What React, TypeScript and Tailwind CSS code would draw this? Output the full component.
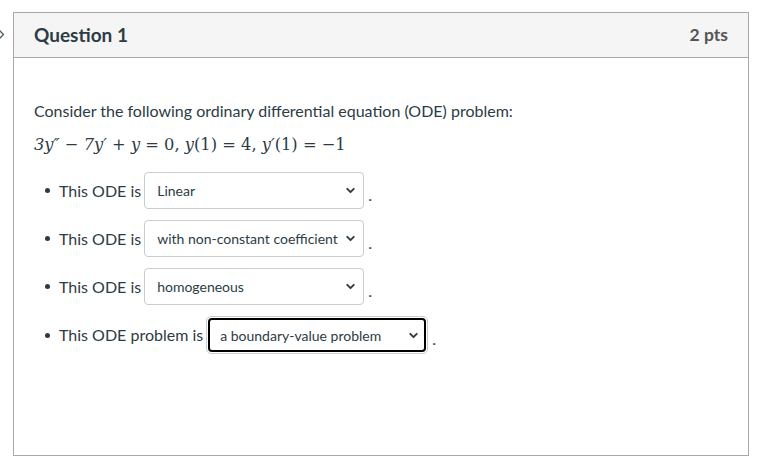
import { ChevronDown } from "lucide-react";

const rows = [
  { label: "This ODE is", value: "Linear", focused: false },
  { label: "This ODE is", value: "with non-constant coefficient", focused: false },
  { label: "This ODE is", value: "homogeneous", focused: false },
  { label: "This ODE problem is", value: "a boundary-value problem", focused: true },
];

function Select({ value, focused }: { value: string; focused: boolean }) {
  if (focused) {
    return (
      <div className="rounded-[5px] border border-[#c7cdd1] p-px">
        <div className="flex h-[34px] w-[218px] items-center justify-between rounded-[4px] border-2 border-black pl-[10px] pr-[4px] text-[14px] text-[#2d3b45]">
          <span>{value}</span>
          <ChevronDown className="h-[13px] w-[13px]" strokeWidth={3.5} />
        </div>
      </div>
    );
  }
  return (
    <div className="flex h-[37px] w-[220px] items-center justify-between rounded-[4px] border border-[#c7cdd1] pl-[12px] pr-[6px] text-[14px] text-[#2d3b45]">
      <span>{value}</span>
      <ChevronDown className="h-[13px] w-[13px]" strokeWidth={3.5} />
    </div>
  );
}

export default function App() {
  return (
    <div className="relative h-[461px] w-[757px] bg-white pl-[13px] pt-[12px] font-['Lato','Noto_Sans',sans-serif] text-[#2d3b45]">
      <svg className="absolute left-[-3px] top-[28px]" width="8" height="13" viewBox="0 0 8 13">
        <path d="M1 1 L6.5 6.5 L1 12" fill="none" stroke="#4a5a66" strokeWidth="1.3" />
      </svg>
      <div className="h-[444px] w-[736px] border border-[#a8a8a8]">
        <div className="flex h-[45px] items-center justify-between border-b border-[#a8a8a8] bg-[#f5f5f5] pl-[20px] pr-[20px]">
          <span className="text-[19px] font-bold">Question 1</span>
          <span className="text-[17.5px] font-bold text-[#555555]">2 pts</span>
        </div>
        <div className="pl-[20px] pt-[41px]">
          <p className="text-[16px]">Consider the following ordinary differential equation (ODE) problem:</p>
          <p className="mt-[10px] font-['DejaVu_Serif',serif] text-[16.3px]">
            <i>3y″ − 7y′ + y</i> = 0, <i>y</i>(1) = 4, <i>y′</i>(1) = −1
          </p>
          <ul className="mt-[15px] flex flex-col gap-[11px] pl-[11px]">
            {rows.map((r, i) => (
              <li key={i} className="flex items-center text-[16px]">
                <span className="mr-[9px] h-[5px] w-[5px] rounded-full bg-[#2d3b45]" />
                <span className="mr-[3px]">{r.label}</span>
                <Select value={r.value} focused={r.focused} />
                <span className="ml-[4px] mt-[8px]">.</span>
              </li>
            ))}
          </ul>
        </div>
      </div>
    </div>
  );
}
